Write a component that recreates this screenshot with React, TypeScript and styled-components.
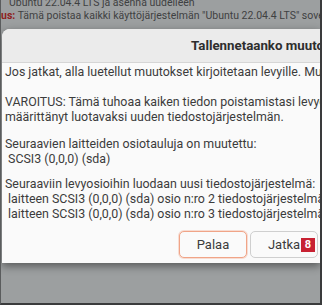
import styled, { createGlobalStyle } from "styled-components";

const GlobalStyle = createGlobalStyle`
  html, body {
    margin: 0;
    padding: 0;
    background: #9c9fa0;
  }
`;

const Frame = styled.div`
  width: 322px;
  height: 305px;
  box-sizing: border-box;
  border-left: 1px solid #5a5c5d;
  border-right: 2px solid #3a3b3c;
  border-bottom: 2px solid #3a3b3c;
  background: #9c9fa0;
  overflow: hidden;
  display: flex;
  flex-direction: column;
  font-family: Roboto, "Noto Sans", sans-serif;
  font-size: 12.4px;
  color: #3c3c3c;
`;

const Backdrop = styled.div`
  height: 29px;
  overflow: hidden;
  white-space: nowrap;
  font-size: 10.5px;
`;

const BackLine = styled.div<{ $shift?: number; $indent?: number }>`
  line-height: 13px;
  margin-top: ${(p) => p.$shift ?? 0}px;
  padding-left: ${(p) => p.$indent ?? 0}px;
  color: #3f4142;
`;

const Warn = styled.span`
  color: #8e2222;
  font-weight: 700;
`;

const Dialog = styled.div`
  margin-left: 1px;
  height: 234px;
  flex: none;
  background: #fafafa;
  border-radius: 8px 0 0 0;
  box-shadow: 0 3px 8px rgba(0, 0, 0, 0.45);
  display: flex;
  flex-direction: column;
  overflow: hidden;
`;

const Header = styled.div`
  height: 34px;
  box-sizing: border-box;
  background: #ebebeb;
  border-bottom: 1px solid #d6d6d6;
  display: flex;
  align-items: center;
  padding-left: 189px;
  white-space: nowrap;
  overflow: hidden;
  font-size: 13.3px;
  font-weight: 700;
  color: #2e2e2e;
`;

const Body = styled.div`
  padding: 1px 0 0 3px;
  white-space: pre;
  overflow: hidden;
  line-height: 15px;
  flex: 1;
  display: flex;
  flex-direction: column;
`;

const Para = styled.div<{ $gap: number }>`
  margin-top: ${(p) => p.$gap}px;
`;

const Footer = styled.div`
  display: flex;
  justify-content: flex-end;
  gap: 3px;
  padding: 0 2px 5px 0;
`;

const Button = styled.button<{ $focus?: boolean }>`
  position: relative;
  width: 68px;
  height: 27px;
  box-sizing: border-box;
  border-radius: 5px;
  border: 1px solid ${(p) => (p.$focus ? "#f0a487" : "#cfcfcf")};
  box-shadow: ${(p) => (p.$focus ? "0 0 0 1px rgba(240,164,135,0.35)" : "none")};
  background: #fafafa;
  font-family: inherit;
  font-size: 13px;
  color: #3c3c3c;
  padding: 0;
`;

const Badge = styled.span`
  position: absolute;
  right: 2px;
  top: 6px;
  width: 14px;
  height: 14px;
  background: #c82233;
  color: #fff;
  font-weight: 700;
  font-size: 11px;
  line-height: 14px;
  text-align: center;
`;

export default function App() {
  return (
    <>
      <GlobalStyle />
      <Frame>
        <Backdrop>
          <BackLine $shift={-4} $indent={8}>
            Ubuntu 22.04.4 LTS ja asenna uudelleen
          </BackLine>
          <BackLine>
            <Warn>us:</Warn> Tämä poistaa kaikki käyttöjärjestelmän "Ubuntu 22.04.4 LTS" sovellukset
          </BackLine>
        </Backdrop>
        <Dialog>
          <Header>Tallennetaanko muutokset levyille?</Header>
          <Body>
            <Para $gap={0}>
              Jos jatkat, alla luetellut muutokset kirjoitetaan levyille. Muutoksia voit tehdä itse myöhemmin.
            </Para>
            <Para $gap={15}>
              {"VAROITUS: Tämä tuhoaa kaiken tiedon poistamistasi levyosioista sekä osioista, joille olet\nmäärittänyt luotavaksi uuden tiedostojärjestelmän."}
            </Para>
            <Para $gap={12}>
              {"Seuraavien laitteiden osiotauluja on muutettu:\n SCSI3 (0,0,0) (sda)"}
            </Para>
            <Para $gap={10}>
              {"Seuraaviin levyosioihin luodaan uusi tiedostojärjestelmä:\n laitteen SCSI3 (0,0,0) (sda) osio n:ro 2 tiedostojärjestelmänä ext4\n laitteen SCSI3 (0,0,0) (sda) osio n:ro 3 tiedostojärjestelmänä ext4"}
            </Para>
          </Body>
          <Footer>
            <Button $focus>Palaa</Button>
            <Button>
              Jatka
              <Badge>8</Badge>
            </Button>
          </Footer>
        </Dialog>
      </Frame>
    </>
  );
}
